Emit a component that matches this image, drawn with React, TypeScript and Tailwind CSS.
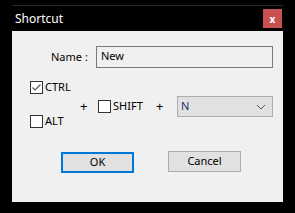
import React from "react";

const font = { fontFamily: '"Noto Sans", "Segoe UI", Arial, sans-serif' };

function Check({ checked }: { checked?: boolean }) {
  return (
    <span className="w-[13px] h-[13px] border border-[#333333] bg-white flex items-center justify-center shrink-0">
      {checked && (
        <svg width="11" height="11" viewBox="0 0 11 11">
          <path d="M1.5 5.5 L4 8 L9.5 2.5" fill="none" stroke="#555555" strokeWidth="1.2" />
        </svg>
      )}
    </span>
  );
}

export default function App() {
  return (
    <div className="w-[295px] h-[213px] bg-black pt-[5px] px-[12px] text-[11px] text-black" style={font}>
      <div className="border-t border-[#2b2b2b]">
        {/* Title bar */}
        <div className="h-[25px] flex items-center justify-between pl-[3px] pr-px">
          <span className="text-white text-[12px]">Shortcut</span>
          <button className="w-[19px] h-[19px] bg-[#c75050] text-white text-[10px] font-bold flex items-center justify-center leading-none">
            x
          </button>
        </div>

        {/* Client */}
        <div className="h-[171px] bg-[#f0f0f0] pt-[15px]">
          <div className="flex items-center">
            <span className="ml-[39px] w-[45px]">Name :</span>
            <div className="w-[177px] h-[22px] border border-[#7a7a7a] bg-[#f0f0f0] px-[4px] flex items-start pt-[1px]">
              New
            </div>
          </div>

          <div className="flex items-start mt-[13px]">
            <div className="ml-[18px] w-[50px] flex flex-col gap-[21px]">
              <label className="flex items-center h-[13px]">
                <Check checked />
                <span className="ml-[2px]">CTRL</span>
              </label>
              <label className="flex items-center h-[13px]">
                <Check />
                <span className="ml-[2px]">ALT</span>
              </label>
            </div>
            <div className="flex items-center h-[21px] mt-[15px]">
              <span className="w-[18px] text-[13px]">+</span>
              <Check />
              <span className="ml-[2px] w-[43px]">SHIFT</span>
              <span className="w-[21px] text-[13px]">+</span>
              <div className="w-[96px] h-[21px] border border-[#adadad] bg-[#e1e1e1] flex items-center justify-between pl-[3px] pr-[6px]">
                <span className="text-[#1a2a6c]">N</span>
                <svg width="10" height="6" viewBox="0 0 10 6">
                  <path d="M1 1 L5 5 L9 1" fill="none" stroke="#555555" strokeWidth="1" />
                </svg>
              </div>
            </div>
          </div>

          <div className="flex items-start mt-[24px]">
            <button className="ml-[49px] w-[73px] h-[21px] border-2 border-[#0078d7] bg-[#e1e1e1] flex items-center justify-center">
              OK
            </button>
            <button className="ml-[34px] -mt-px w-[73px] h-[21px] border border-[#adadad] bg-[#e1e1e1] flex items-center justify-center">
              Cancel
            </button>
          </div>
        </div>
      </div>
    </div>
  );
}
